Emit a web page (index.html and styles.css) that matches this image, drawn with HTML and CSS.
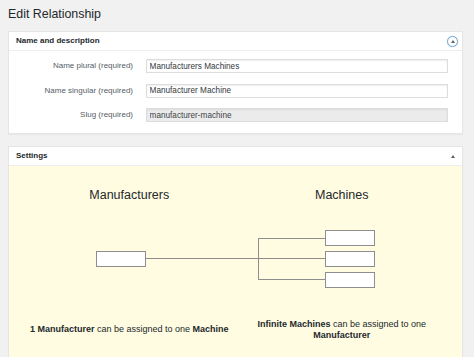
FILE: index.html
```html
<!DOCTYPE html>
<html>
<head>
<meta charset="utf-8">
<link rel="stylesheet" href="styles.css">
</head>
<body>
<div class="wrap">
  <h1 class="title">Edit Relationship</h1>

  <div class="panel">
    <div class="panel-head">
      <span class="panel-title">Name and description</span>
      <span class="toggle focused"><span class="tri"></span></span>
    </div>
    <div class="panel-body form">
      <label class="lbl">Name plural (required)</label>
      <input class="field" type="text" value="Manufacturers Machines" readonly>
      <label class="lbl">Name singular (required)</label>
      <input class="field" type="text" value="Manufacturer Machine" readonly>
      <label class="lbl">Slug (required)</label>
      <input class="field disabled" type="text" value="manufacturer-machine" readonly>
    </div>
  </div>

  <div class="panel panel-settings">
    <div class="panel-head">
      <span class="panel-title">Settings</span>
      <span class="toggle"><span class="tri"></span></span>
    </div>
    <div class="diagram">
      <div class="cols">
        <div class="col-title">Manufacturers</div>
        <div class="col-title">Machines</div>
      </div>
      <svg class="links" width="425" height="116" viewBox="0 0 425 116">
        <g fill="#fff" stroke="#8e8e8e" stroke-width="1">
          <rect x="73.5" y="48.5" width="49" height="15"/>
          <rect x="302.5" y="27.5" width="49" height="15"/>
          <rect x="302.5" y="48.5" width="49" height="15"/>
          <rect x="302.5" y="69.5" width="49" height="15"/>
        </g>
        <g fill="none" stroke="#8e8e8e" stroke-width="1">
          <path d="M123 55.5 H302"/>
          <path d="M235.5 35 V77"/>
          <path d="M235.5 35.5 H302"/>
          <path d="M235.5 76.5 H302"/>
        </g>
      </svg>
      <div class="cols captions">
        <p class="cap"><b>1 Manufacturer</b> can be assigned to one <b>Machine</b></p>
        <p class="cap cap-wrap"><b>Infinite Machines</b> can be assigned to one <b>Manufacturer</b></p>
      </div>
    </div>
  </div>
</div>
</body>
</html>
```
FILE: styles.css
```css
html, body {
  margin: 0;
  padding: 0;
  background: #f1f1f1;
  font-family: "Liberation Sans", Arial, sans-serif;
  color: #23282d;
}
.wrap {
  padding: 0 11px 0 8px;
}
.title {
  margin: 0 0 9px;
  padding-top: 6px;
  font-size: 12.4px;
  line-height: 16px;
  font-weight: 400;
  color: #23282d;
}
.panel {
  background: #fff;
  border: 1px solid #e5e5e5;
  box-shadow: 0 1px 1px rgba(0,0,0,.04);
}
.panel-settings {
  margin-top: 12px;
}
.panel-head {
  display: flex;
  align-items: center;
  justify-content: space-between;
  height: 18px;
  padding: 0 4px 0 7px;
  border-bottom: 1px solid #eeeeee;
}
.panel-title {
  font-size: 8px;
  font-weight: 700;
  line-height: 18px;
  color: #23282d;
}
.toggle {
  width: 11px;
  height: 11px;
  box-sizing: border-box;
  border-radius: 50%;
  display: flex;
  align-items: center;
  justify-content: center;
}
.toggle.focused {
  border: 1px solid #6fa3d4;
  box-shadow: 0 0 1px rgba(30,140,190,.5);
}
.tri {
  width: 0;
  height: 0;
  border-left: 2px solid transparent;
  border-right: 2px solid transparent;
  border-bottom: 3px solid #5d6166;
}
.form {
  display: grid;
  grid-template-columns: 124px 1fr;
  column-gap: 12.6px;
  row-gap: 10.5px;
  align-items: center;
  padding: 8px 14px 11px 0;
}
.lbl {
  text-align: right;
  font-size: 8px;
  line-height: 14px;
  color: #555d66;
}
.field {
  display: block;
  box-sizing: border-box;
  width: 100%;
  height: 14px;
  margin: 0;
  padding: 0 3px;
  border: 1px solid #dddddd;
  border-radius: 0;
  box-shadow: inset 0 1px 2px rgba(0,0,0,.07);
  background: #fff;
  font-family: "Liberation Sans", Arial, sans-serif;
  font-size: 8.2px;
  color: #32373c;
  outline: none;
}
.field.disabled {
  background: #ebebeb;
  color: #3c4249;
}
.diagram {
  background: #fffce1;
  padding: 21px 14px 24px;
}
.cols {
  display: grid;
  grid-template-columns: 1fr 1fr;
  align-items: center;
}
.col-title {
  text-align: center;
  font-size: 12.5px;
  line-height: 16px;
  color: #23282d;
}
.links {
  display: block;
}
.captions {
  height: 21px;
}
.cap {
  margin: 0;
  text-align: center;
  font-size: 9px;
  line-height: 10.5px;
  color: #23282d;
}
.cap-wrap {
  padding: 0 16px;
}
```
